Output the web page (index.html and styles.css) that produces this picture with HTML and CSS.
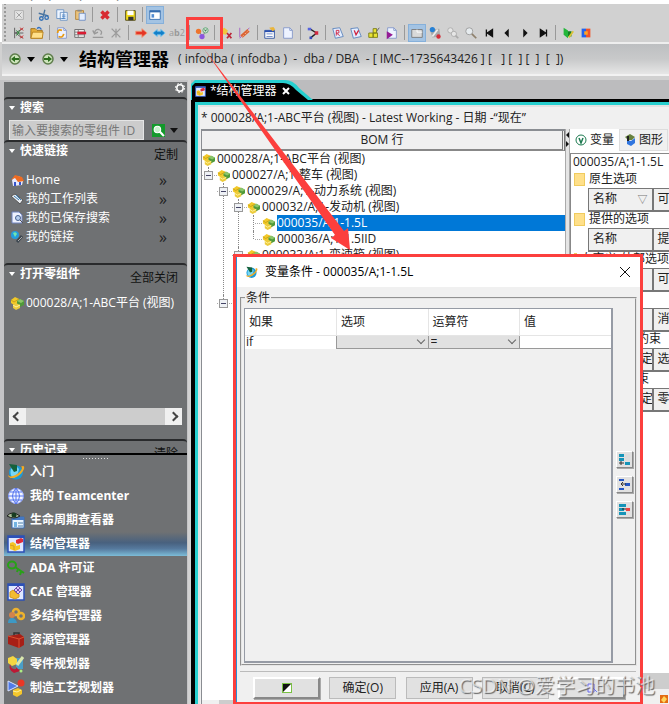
FILE: index.html
```html
<!DOCTYPE html>
<html lang="zh-CN">
<head>
    <meta charset="utf-8">
    <title>结构管理器</title>
    <link rel="stylesheet" href="styles.css">
</head>
<body>
    <svg class="defs">
        <symbol id="bom" viewBox="0 0 14 14"><path d="M1 4l4-3 4 2-1 4-4 2-3-2z" fill="#f2c928"/><path d="M1 4l3 2 5-3" stroke="#c9a21a" fill="none"/><path d="M7 5l3-2 4 2v4l-4 2-3-2z" fill="#4f9a3a"/><path d="M7 5l3-2 4 2-3 2z" fill="#8cc66a"/><path d="M3 9l3-2 4 2v3l-4 2-3-2z" fill="#eccb3c"/><path d="M3 9l3 2 4-2" stroke="#fff3a0" fill="none"/></symbol>
        <symbol id="globe" viewBox="0 0 18 18"><circle cx="9" cy="9.500" r="7" fill="#1b9bd8"/><path d="M4 6q5-5 8 0l-1 4-4 5q-5-2-3-9z" fill="#76d7f5"/><path d="M2 1l8 1v6L7 9z" fill="#14613c"/><path d="M1 12c1 6 12 3 16-6 1-4-2-3-3-2 3 0-1 7-8 9-3 1-4 0-5-1z" fill="#f3ab22"/></symbol>
        <symbol id="struct" viewBox="0 0 18 18"><path fill="#dfe8ff" stroke="#2c50b8" stroke-width="1.500" d="M1 1h16v16H1z"/><path fill="#2c50b8" d="M1 1h16v2H1z"/><path fill="#f6c526" d="M3 8l3-1 3 2v2l4-1v4l-5 2-5-2z"/><path fill="#e02c3a" d="M9 5l5-2 2 1v3l-5 2-2-1z"/><path d="M3 10l4 1v4" stroke="#d59d22" fill="none"/></symbol>
        <symbol id="page" viewBox="0 0 16 16"><path d="M3 2h7l3 3v9H3z" fill="#eef3ff" stroke="#8296c8"/><path d="M10 2v3h3" fill="none" stroke="#8296c8"/></symbol>
        <symbol id="folder" viewBox="0 0 16 16"><path d="M1 5V3h5l2 2h6v9H1z" fill="#e6ae38" stroke="#9c6c13"/><path d="M1 14l2-7h12l-1 7z" fill="#ffe08a" stroke="#b8811c"/><path d="M8 3q3-3 5 1" fill="none" stroke="#2d6fc4" stroke-width="1.500"/></symbol>
        <symbol id="key" viewBox="0 0 18 18"><ellipse cx="5" cy="6" rx="4" ry="3.500" fill="none" stroke="#27a217" stroke-width="2"/><path d="M8 8l9 6m-6-4l-1 3m4 0l-1 3" stroke="#27a217" stroke-width="2"/></symbol>
    </svg>

    <div class="menubar">· &nbsp; ¸ · &nbsp; &nbsp; &nbsp; ¸ · &nbsp; &nbsp; &nbsp; &nbsp; ¸ ·</div>

    <div class="toolbars">
        <div class="toolbar">
            <button class="tool" title="关闭"><svg viewBox="0 0 16 16"><path d="M3 3h10v10H3z" fill="#e4e4e4" stroke="#aaa"/><path d="M5 5l6 6m0-6l-6 6" stroke="#999"/></svg></button>
            <span class="sep"></span>
            <button class="tool" title="剪切"><svg viewBox="0 0 16 16"><path d="M9 2L7 10M2 6l11 3" stroke="#47729e" stroke-width="1.500"/><g fill="none" stroke="#316fb5" stroke-width="1.500"><circle cx="5" cy="12" r="2"/><circle cx="11" cy="11" r="2"/></g></svg></button>
            <button class="tool" title="复制"><svg viewBox="0 0 16 16"><path d="M2 2h8v10H2zM6 5h8v9H6z" fill="#eef5ff" stroke="#6c93c4"/><path d="M8 8h4m-4 2h4m-4 2h4" stroke="#4d86c5"/></svg></button>
            <button class="tool" title="粘贴"><svg viewBox="0 0 16 16"><path d="M3 3h9v10H3z" fill="#eac37d" stroke="#b58232"/><path d="M5 2h5v2H5z" fill="#888"/><path d="M7 6h7v8H7z" fill="#e4eeff" stroke="#6b8cc2"/></svg></button>
            <span class="sep"></span>
            <button class="tool" title="删除"><svg viewBox="0 0 16 16"><path d="M4 4l8 8m0-8l-8 8" stroke="#d82931" stroke-width="4"/></svg></button>
            <span class="sep"></span>
            <button class="tool" title="保存"><svg viewBox="0 0 16 16"><path d="M3 3h11v11H3z" fill="#f2dc1a" stroke="#4d4515"/><path d="M5 3h7v5H5z" fill="#fff"/><path d="M6 10h6v4H6z" fill="#333"/></svg></button>
            <span class="sep"></span>
            <button class="tool active" title="导航"><svg viewBox="0 0 16 16"><path d="M2 3h12v10H2z" fill="#fff" stroke="#356cae"/><path d="M2 3h12v2H2z" fill="#356cae"/><path d="M4 7h3v4H4z" fill="#528cd1"/></svg></button>
        </div>
        <div class="toolbar">
            <button class="tool" title="展开"><svg viewBox="0 0 16 16"><path d="M3 2v12M3 8h10M4 8l8-5M4 8l8 6" stroke="#555"/><path d="M9 2l4 3m0-3L9 5m0 6l4 3m0-3l-4 3" stroke="#c33"/><path d="M5 5l4 5M9 5l-4 6" stroke="#268d36"/></svg></button>
            <button class="tool" title="打开"><svg><use href="#folder"/></svg></button>
            <span class="sep"></span>
            <button class="tool" title="刷新"><svg><use href="#page"/></svg><svg class="over" viewBox="0 0 16 16"><path d="M3 8q0-5 5-3M10 9q-1 5-6 3" fill="none" stroke="#e79a12" stroke-width="2"/></svg></button>
            <button class="tool" title="移除行"><svg viewBox="0 0 16 16"><path d="M2 4h11v9H2z" fill="#eee" stroke="#666"/><path d="M2 7h11M2 10h11M6 4v9" stroke="#777"/><path d="M5 8h10" stroke="#da1b32" stroke-width="3"/></svg></button>
            <button class="tool" title="撤消"><svg viewBox="0 0 16 16"><path d="M4 8q1-5 5-4 5 2 2 6M2 5l2 4 4-2M2 13h12" fill="none" stroke="#999" stroke-width="1.500"/></svg></button>
            <button class="tool" title="取消"><svg viewBox="0 0 16 16"><path d="M3 3l10 10m0-10L3 13M8 3v10" stroke="#9b9b9b" stroke-width="1.500"/></svg></button>
            <span class="sep"></span>
            <button class="tool" title="前进"><svg viewBox="0 0 16 16"><path d="M2 6h7V3l6 5-6 5v-3H2z" fill="#e53525" stroke="#ef9a78"/></svg></button>
            <button class="tool" title="替换"><svg viewBox="0 0 16 16"><path d="M1 8l5-4v2h4V4l5 4-5 4v-2H6v2z" fill="#127fc8" stroke="#6fc1ee"/></svg></button>
            <button class="tool wide" title="文本">a<b>b</b>2</button>
            <span class="sep"></span>
            <button class="tool marked" title="变量条件"><svg viewBox="0 0 16 16"><path d="M4 6l5 6m0 0l3-7" stroke="#777"/><circle cx="4" cy="6" r="3" fill="#ee742c"/><circle cx="12" cy="5" r="3" fill="#d4e7d8" stroke="#57a16b"/><path d="M11 4l1 2 1-2" stroke="#1c6838" fill="none"/><circle cx="8" cy="12" r="3" fill="#8b56df"/></svg></button>
            <span class="sep"></span>
            <button class="tool" title="清除条件"><svg viewBox="0 0 16 16"><path d="M1 4l4-2 4 3-2 5-5-1z" fill="#f2c73c"/><path d="M8 8l5 6m0-6l-5 6" stroke="#bd2739" stroke-width="2"/></svg></button>
            <button class="tool" title="连接"><svg viewBox="0 0 16 16"><path d="M2 2v11M2 14l11-12" stroke="#a45ec6"/><path d="M4 12l8-7" stroke="#db6434" stroke-width="4"/><path d="M5 12l8-8" stroke="#f9c2a1" stroke-dasharray="2 2"/></svg></button>
            <span class="sep"></span>
            <button class="tool" title="属性"><svg viewBox="0 0 16 16"><path d="M2 5h11v9H2z" fill="#fff" stroke="#294f9d"/><path d="M2 5h11v2H2z" fill="#294fb0"/><path d="M4 9h7m-7 3h7" stroke="#6684c5"/><path d="M7 2l5-1 2 3-3 2z" fill="#eab53a"/></svg></button>
            <button class="tool" title="新建"><svg><use href="#page"/></svg></button>
            <span class="sep"></span>
            <button class="tool" title="路径"><svg viewBox="0 0 16 16"><path d="M4 3l8 5-6 5" fill="none" stroke="#222" stroke-width="1.500"/><path d="M2 2h4v3H2z" fill="#5664df"/><path d="M10 6h4v4h-4z" fill="#d22840"/><path d="M4 12h3v3H4z" fill="#3347b8"/></svg></button>
            <span class="sep"></span>
            <button class="tool" title="版本规则"><svg viewBox="0 0 16 16"><path d="M2 3l8-1 4 10-9 2z" fill="#e2edff" stroke="#5c84bc"/><path d="M6 11V5h3v3H6l4 3" fill="none" stroke="#d1203b"/></svg></button>
            <button class="tool" title="变量规则"><svg viewBox="0 0 16 16"><path d="M2 3l8-1 4 10-9 2z" fill="#e2edff" stroke="#5c84bc"/><path d="M6 5l2 5 3-5" fill="none" stroke="#d1203b" stroke-width="1.500"/></svg></button>
            <button class="tool" title="配置"><svg viewBox="0 0 16 16"><g fill="#e9e334" stroke="#787a17"><path d="M2 8h5v5H2zM7 8h5v5H7zM7 3h4v5H7z"/></g><path d="M11 6l3-4" stroke="#555"/></svg></button>
            <button class="tool" title="导出"><svg><use href="#page"/></svg><svg class="over" viewBox="0 0 16 16"><path d="M2 6l7 4-7 5z" fill="#941b95"/></svg></button>
            <span class="sep"></span>
            <button class="tool active" title="面板"><svg viewBox="0 0 16 16"><path d="M2 4h12v9H2z" fill="#d9d9d9" stroke="#777"/><path d="M8 4v3h6" fill="none" stroke="#fff"/></svg></button>
            <button class="tool" title="比较"><svg viewBox="0 0 16 16"><path d="M2 4l11-1 1 9-9 1z" fill="#aaa"/><path d="M5 12l6-8" stroke="#eee" stroke-width="2"/><circle cx="5" cy="4" r="3" fill="#2781d5"/><circle cx="12" cy="12" r="2.500" fill="#d62c38"/></svg></button>
            <button class="tool" title="缩放"><svg viewBox="0 0 16 16"><g fill="#e6e6e6" stroke="#aaa"><circle cx="5" cy="5" r="3"/><circle cx="9" cy="9" r="3"/></g><path d="M11 11l3 3" stroke="#aaa" stroke-width="2"/></svg></button>
            <button class="tool" title="查找"><svg viewBox="0 0 16 16"><circle cx="6" cy="6" r="4" fill="#e6ebee" stroke="#999"/><path d="M9 9l5 5" stroke="#8e806c" stroke-width="2"/></svg></button>
            <button class="tool" title="第一个"><svg viewBox="0 0 16 16"><path d="M5 4v8M12 4v8L6 8z" stroke="#111" fill="#111" stroke-width="1.500"/></svg></button>
            <button class="tool" title="上一个"><svg viewBox="0 0 16 16"><path d="M10 3v10L5 8z" fill="#111"/></svg></button>
            <button class="tool" title="下一个"><svg viewBox="0 0 16 16"><path d="M6 3v10l5-5z" fill="#111"/></svg></button>
            <button class="tool" title="最后一个"><svg viewBox="0 0 16 16"><path d="M12 4v8M5 4v8l6-4z" stroke="#111" fill="#111" stroke-width="1.500"/></svg></button>
            <span class="sep"></span>
            <button class="tool" title="应用"><svg viewBox="0 0 16 16"><path d="M3 2l5 3v9l-5-4z" fill="#23b63a"/><path d="M8 6h4v6H8z" fill="#137d23"/><path d="M9 13l5-7" stroke="#dac337" stroke-width="2"/></svg></button>
            <button class="tool" title="拼合"><svg viewBox="0 0 16 16"><path d="M3 3h5v10H3z" fill="#2263ef"/><path d="M8 3h5v10H8z" fill="#f2532a"/><path d="M6 6h4v4H6z" fill="#ffa425"/></svg></button>
        </div>
    </div>

    <header class="banner">
        <button class="round" title="后退"><svg viewBox="0 0 14 14"><circle cx="7" cy="7" r="5" fill="#cde4bb" stroke="#5e7d4b" stroke-width="1.500"/><path d="M3 7l4-3v2h4v2H7v2z" fill="#2c6e1e"/></svg></button>
        <span class="caret"></span>
        <button class="round" title="前进"><svg viewBox="0 0 14 14"><circle cx="7" cy="7" r="5" fill="#cde4bb" stroke="#5e7d4b" stroke-width="1.500"/><path d="M11 7L7 4v2H3v2h4v2z" fill="#2c6e1e"/></svg></button>
        <span class="caret"></span>
        <h1>结构管理器</h1>
        <span class="session">( infodba ( infodba )  -  dba / DBA  - [ IMC--1735643426 ] [ &nbsp; ] [ &nbsp;] [ &nbsp;] &nbsp;[ &nbsp;])</span>
    </header>

    <main>
        <aside class="sidebar">
            <div class="side-top"><svg viewBox="0 0 12 12"><circle cx="6" cy="6" r="3.200" fill="none" stroke="#fff" stroke-width="1.500"/><circle cx="6" cy="6" r="4.600" fill="none" stroke="#fff" stroke-dasharray="1.800 1.800"/></svg></div>

            <section class="panel search">
                <h2>搜索</h2>
                <div class="search-row">
                    <input type="text" placeholder="输入要搜索的零组件 ID" aria-label="搜索零组件">
                    <button class="go" title="搜索"><svg viewBox="0 0 12 12"><circle cx="5" cy="5" r="3" fill="#c9f2cd" stroke="#fff"/><path d="M7 7l4 4" stroke="#fff" stroke-width="2"/></svg></button>
                    <span class="caret"></span>
                </div>
            </section>

            <section class="panel links">
                <h2>快速链接</h2>
                <a class="action" href="#">定制</a>
                <ul>
                    <li><svg viewBox="0 0 14 14"><path d="M2 7l3-4h4l4 5-1 4-9 1z" fill="#e7eaff"/><path d="M1 7l4-5 7 2 2 4-6 1-3-4z" fill="#ef6c22"/><path d="M4 9h2v4H4zM9 9h2v3H9z" fill="#3754c9"/></svg><a href="#">Home</a><span>»</span></li>
                    <li><svg viewBox="0 0 14 14"><path d="M1 4l4-2 8 6-3 4z" fill="#e9ecef" stroke="#555"/><path d="M4 4l5 4m-3-5l5 5" stroke="#397fb9"/></svg><a href="#">我的工作列表</a><span>»</span></li>
                    <li><svg viewBox="0 0 14 14"><path d="M2 1h7l3 3v8H2z" fill="#eef2ff" stroke="#7185c0"/><circle cx="8" cy="7" r="2.500" fill="#b7cff0" stroke="#47618f"/><path d="M10 9l3 3" stroke="#555"/></svg><a href="#">我的已保存搜索</a><span>»</span></li>
                    <li><svg viewBox="0 0 14 14"><circle cx="5" cy="5" r="4" fill="#239dde"/><path d="M3 3q3-2 4 1L5 7z" fill="#73e5ad"/><path d="M7 12l5-6" stroke="#3d4750" stroke-width="3"/><path d="M8 11l4-4" stroke="#aaa"/></svg><a href="#">我的链接</a><span>»</span></li>
                </ul>
            </section>

            <section class="panel opened">
                <h2>打开零组件</h2>
                <a class="action" href="#">全部关闭</a>
                <ul>
                    <li><svg><use href="#bom"/></svg><a href="#">000028/A;1-ABC平台 (视图)</a></li>
                </ul>
                <div class="hscroll"><button title="向左"></button><i></i><button class="next" title="向右"></button></div>
            </section>

            <section class="panel history">
                <h2>历史记录</h2>
                <a class="action" href="#">清除</a>
            </section>

            <div class="sash"></div>

            <nav>
                <a href="#"><svg><use href="#globe"/></svg>入门</a>
                <a href="#"><svg viewBox="0 0 18 18"><circle cx="9" cy="9" r="7.500" fill="#f2f5ff" stroke="#9daeff"/><path d="M1 9h16M3 5h12M3 13h12M9 1v16M9 1Q2 9 9 17M9 1q7 8 0 16" fill="none" stroke="#5474f0"/></svg>我的 Teamcenter</a>
                <a href="#"><svg viewBox="0 0 18 18"><path d="M5 6h12v11H5z" fill="#e9f4ff" stroke="#3a6fb5"/><path d="M5 6h12v3H5z" fill="#4478c4"/><path d="M7 11h3v5H7z" fill="#71b3e3"/><path d="M11 12h5m-5 3h5" stroke="#4b7eaa"/><path d="M0 5q5-6 13 0-6 4-13 0z" fill="#a9bb98" stroke="#222"/><circle cx="7" cy="4" r="2.500" fill="#183c21"/></svg>生命周期查看器</a>
                <a href="#" class="current"><svg><use href="#struct"/></svg>结构管理器</a>
                <a href="#"><svg><use href="#key"/></svg>ADA 许可证</a>
                <a href="#"><svg viewBox="0 0 18 18"><path fill="#dfe8ff" stroke="#2c50b8" stroke-width="1.500" d="M1 1h16v16H1z"/><path fill="#2c50b8" d="M1 1h16v2H1z"/><path fill="#f4bc31" stroke="#d59d22" d="M3 9l3-2 3 3 3 1v3l-4 2-5-2z"/><path d="M11 3l4 4-4 4-4-4zM9 5l4 4m0-4L9 9" fill="#d9cdf2" stroke="#744aae"/></svg>CAE 管理器</a>
                <a href="#"><svg viewBox="0 0 18 18"><circle cx="9" cy="5" r="3" fill="none" stroke="#edb22d" stroke-width="2.500"/><circle cx="14" cy="9" r="3" fill="none" stroke="#edb22d" stroke-width="2.500"/><circle cx="5" cy="8" r="3" fill="#d1834d"/><path d="M1 16q0-5 4-5t5 5z" fill="#3d99c5"/></svg>多结构管理器</a>
                <a href="#"><svg viewBox="0 0 18 18"><path d="M7 4V2h5v3" fill="none" stroke="#333" stroke-width="1.500"/><path d="M1 5l12-2 4 3v8l-5 3-11-4z" fill="#a71f16"/><path d="M1 5l11 3 5-2M12 8v9" stroke="#dc5131" fill="none"/></svg>资源管理器</a>
                <a href="#"><svg viewBox="0 0 18 18"><path d="M9 3h7v11H9z" fill="#4b9ec7"/><path d="M1 3l5-2 4 3v5l-5 2-4-3z" fill="#f4d642"/><path d="M10 10l6-8" stroke="#d9e7ae" stroke-width="3"/><path d="M3 9q1 6 6 5v-2l4 4-6 2q-6-3-4-9z" fill="#bd1935"/><circle cx="14" cy="16" r="1.500" fill="#aded83"/></svg>零件规划器</a>
                <a href="#"><svg viewBox="0 0 18 18"><path d="M1 2l10 5-10 5z" fill="#507be8" stroke="#d9e3ff"/><circle cx="14" cy="4" r="3.500" fill="#e93725"/><path d="M6 11l5-2 4 2v4l-5 3-4-2z" fill="#f5c72b"/><path d="M6 12l4 1 4-2" stroke="#fff2a1" fill="none"/></svg>制造工艺规划器</a>
                <a href="#" title="制造"><svg><use href="#globe"/></svg></a>
            </nav>
        </aside>

        <div class="editor">
            <div class="tabstrip">
                <svg class="tab-shape" viewBox="0 0 124 20"><path d="M0 20V4l4-4h90q8 0 14 8l14 12z" fill="#26cfcf"/><path d="M1 20V6l3-3h88q7 0 13 7l12 10z" fill="#000"/></svg>
                <div class="tab"><svg><use href="#struct"/></svg><span>*结构管理器</span><button title="关闭"><svg viewBox="0 0 8 8"><path d="M1 1l6 6m0-6L1 7" stroke="#fff" stroke-width="2"/></svg></button></div>
            </div>
            <div class="frame">
                <div class="frame-title">* 000028/A;1-ABC平台 (视图) - Latest Working - 日期 -“现在”</div>
                <div class="split">
                    <div class="bom">
                        <div class="bom-head">BOM 行</div>
                        <div class="row root"><svg><use href="#bom"/></svg><span>000028/A;1-ABC平台 (视图)</span></div>
                        <ul class="tree">
                            <li>
                                <div class="row"><i class="minus"></i><svg><use href="#bom"/></svg><span>000027/A;1-整车 (视图)</span></div>
                                <ul>
                                    <li>
                                        <div class="row"><i class="minus"></i><svg><use href="#bom"/></svg><span>000029/A;1-动力系统 (视图)</span></div>
                                        <ul>
                                            <li>
                                                <div class="row"><i class="minus"></i><svg><use href="#bom"/></svg><span>000032/A;1-发动机 (视图)</span></div>
                                                <ul>
                                                    <li><div class="row selected"><i></i><svg><use href="#bom"/></svg><span>000035/A;1-1.5L</span></div></li>
                                                    <li><div class="row"><i></i><svg><use href="#bom"/></svg><span>000036/A;1-1.5IID</span></div></li>
                                                </ul>
                                            </li>
                                            <li>
                                                <div class="row"><i class="minus"></i><svg><use href="#bom"/></svg><span>000033/A;1-变速箱 (视图)</span></div>
                                                <ul>
                                                    <li><div class="row"><i></i><svg><use href="#bom"/></svg></div></li>
                                                    <li><div class="row"><i></i><svg><use href="#bom"/></svg></div></li>
                                                </ul>
                                            </li>
                                        </ul>
                                    </li>
                                    <li><div class="row"><i class="minus"></i><svg><use href="#bom"/></svg></div></li>
                                </ul>
                            </li>
                        </ul>
                        <div class="bom-scroll"></div>
                    </div>
                    <div class="divider"></div>
                    <div class="details">
                        <div class="detail-tabs">
                            <button class="on"><svg viewBox="0 0 12 12"><circle cx="6" cy="6" r="5" fill="#fff" stroke="#1d7a50"/><path d="M4 4l2 5 2-5" fill="none" stroke="#1d7a50" stroke-width="1.500"/></svg>变量</button>
                            <button><svg viewBox="0 0 12 12"><path d="M1 3l5-3 5 3-3 3H4z" fill="#66813e"/><path d="M3 6l4 1 4-3v5l-4 3-4-2z" fill="#3176df"/><path d="M4 2v5" stroke="#222" stroke-width="2"/></svg>图形</button>
                        </div>
                        <div class="options">
                            <div class="item-name">000035/A;1-1.5L</div>
                            <div class="group"><div class="group-name"><i></i>原生选项</div><table><tr><th>名称<em>▽</em></th><th>可见性</th></tr></table></div>
                            <div class="group"><div class="group-name"><i></i>提供的选项</div><table><tr><th>名称</th><th>提供者</th></tr></table></div>
                            <div class="group"><div class="group-name"><i></i>自定义/外部选项</div><table><tr><th></th><th>可见性</th></tr></table></div>
                            <div class="group"><div class="group-name"><i></i></div><table><tr><th></th><th>消息</th></tr></table></div>
                            <div class="group"><div class="group-name"><i></i>派生缺省约束</div><table><tr><th>选项已设定</th><th>选项</th></tr></table></div>
                            <div class="group"><div class="group-name"><i></i>有效性约束</div><table><tr><th>选项已设定</th><th>零件</th></tr></table></div>
                        </div>
                        <div class="details-scroll"></div>
                        <div class="details-foot"><svg viewBox="0 0 10 10"><path d="M1 1h8v8H1z" fill="#e36b12"/><path d="M2 6l3-4 3 3-3 4z" fill="#ffd45a"/></svg></div>
                    </div>
                </div>
            </div>
        </div>
    </main>

    <div class="dialog" role="dialog" aria-label="变量条件">
        <div class="dialog-title"><svg><use href="#globe"/></svg><span>变量条件 - 000035/A;1-1.5L</span><button title="关闭"><svg viewBox="0 0 12 12"><path d="M1 1l10 10m0-10L1 11" stroke="#111"/></svg></button></div>
        <fieldset>
            <legend>条件</legend>
            <div class="cond">
                <table>
                    <tr><th>如果</th><th>选项</th><th>运算符</th><th>值</th></tr>
                    <tr>
                        <td>if</td>
                        <td class="combo"><select aria-label="选项"><option></option></select></td>
                        <td class="combo"><select aria-label="运算符"><option>=</option><option>!=</option></select></td>
                        <td class="value"><input type="text" aria-label="值"></td>
                    </tr>
                </table>
            </div>
            <div class="cond-tools">
                <button title="添加"><svg viewBox="0 0 12 12"><path d="M1 0h5v3H1zM1 4h5v3H1zM7 8h5v3H7z" fill="#1594b8"/><path d="M7 0h5v7H7z" fill="#ddd"/><path d="M1 9h5M3 7v4" stroke="#333"/></svg></button>
                <button title="插入"><svg viewBox="0 0 12 12"><path d="M1 0h5v2H1zM7 4h5v3H7zM1 9h5v2H1z" fill="#2456c5"/><path d="M3 5h5M5 3L3 5l2 2" stroke="#333" fill="none"/></svg></button>
                <button title="移除"><svg viewBox="0 0 12 12"><path d="M1 0h7v3H1zM1 4h5v3H1zM1 8h7v3H1z" fill="#1594b8"/><path d="M8 4h4v3H8z" fill="#e44"/><path d="M4 5h4" stroke="#222"/></svg></button>
            </div>
        </fieldset>
        <div class="dialog-buttons">
            <button class="raised" title="清除"><svg viewBox="0 0 10 10"><path d="M0 0h10v10H0z" fill="#fff" stroke="#7ac143" stroke-width="2"/><path d="M1 1h8L1 9z" fill="#111"/></svg></button>
            <button>确定(O)</button>
            <button>应用(A)</button>
            <button>取消(C)</button>
            <button class="raised" title="帮助"><svg viewBox="0 0 10 10"><path d="M1 1h6v8H1z" fill="#e5e5ff" stroke="#6b6bea"/><path d="M6 5l4 4" stroke="#6b6bea"/></svg></button>
        </div>
    </div>

    <svg class="arrow" viewBox="0 0 150 204"><path d="M0 0L140 182l4-3 2 22-19-12 4-3z" fill="#fc3f3d"/></svg>
    <div class="watermark">CSDN @爱学习的书池</div>
</body>
</html>
```

FILE: styles.css
```css
*, *::before, *::after { box-sizing: border-box; }
body { margin: 0; height: 100vh; overflow: hidden; position: relative; display: flex; flex-direction: column; background: #d1d1d1; color: #222; font: 12px/16px "Open Sans", "Noto Sans CJK SC", sans-serif; }
button, input, select { font: inherit; color: inherit; margin: 0; padding: 0; border: 0; border-radius: 0; background: none; }
h1, h2, ul { margin: 0; padding: 0; list-style: none; }
a { color: inherit; text-decoration: none; }
svg { display: block; flex: none; }
table { border-collapse: collapse; }
.defs { position: absolute; width: 0; height: 0; }

/* toolbars */
.menubar { height: 4px; flex: none; padding-left: 30px; background: #fff; overflow: hidden; line-height: 1px; color: #888; }
.toolbars { flex: none; height: 38px; padding: 2px 0 0 10px; border-left: 2px solid #fff; background: radial-gradient(circle, #999 1px, transparent 1px) 1px 2px / 4px 4px repeat-y, #d1d1d1; }
.toolbar { display: flex; height: 18px; margin-left: -2px; }
.tool { position: relative; width: 18px; height: 18px; flex: none; display: flex; align-items: center; justify-content: center; }
.tool svg { width: 14px; height: 14px; }
.tool .over { position: absolute; left: 2px; top: 2px; }
.tool.active { background: #a3c3e3; outline: 1px solid #86b0da; outline-offset: -1px; }
.tool.wide { font-size: 9px; color: #999; }
.marked::after { content: ""; position: absolute; left: -7px; top: -7px; width: 37px; height: 32px; border: 3px solid #fc3f3d; z-index: 2; }
.sep { width: 7px; flex: none; background: linear-gradient(#999, #999) 3px 1px / 1px 15px no-repeat; }

/* banner */
.banner { flex: none; height: 34px; margin: 0 0 4px 2px; padding-left: 6px; display: flex; align-items: center; border-top: 2px solid #eee; border-bottom: 2px solid #f2f2f2; background: linear-gradient(#bdbfc1, #c8c9ca 50%, #e6e6e6); }
.round { width: 14px; height: 14px; }
.round svg { width: 14px; height: 14px; }
.caret { width: 0; height: 0; flex: none; margin: 0 6px 0 5px; border: 4px solid transparent; border-top: 5px solid #000; border-bottom: 0; }
h1 { margin-left: 5px; font-size: 18px; line-height: 28px; color: #000; white-space: nowrap; }
.session { margin-left: 9px; white-space: pre; }

main { flex: 1; min-height: 0; display: flex; }

/* sidebar */
.sidebar { width: 188px; flex: none; display: flex; flex-direction: column; margin: 0 3px 0 0; border: solid #c4c4c6; border-width: 2px 1px 0 4px; background: #6f7173; color: #fff; overflow: hidden; }
.side-top { height: 15px; flex: none; display: flex; justify-content: flex-end; padding: 0 1px; }
.side-top svg { width: 12px; height: 12px; }
.panel { position: relative; flex: none; border-top: 2px solid #292a2c; border-radius: 4px 4px 0 0; overflow: hidden; }
.panel h2 { display: flex; align-items: center; padding-left: 5px; font-size: 12px; line-height: 18px; }
.panel h2::before { content: ""; margin-right: 5px; border: 3px solid transparent; border-top: 4px solid #fff; border-bottom: 0; }
.panel .action { position: absolute; right: 9px; top: 5px; color: #111; }
.panel li { display: flex; align-items: center; height: 19px; padding-left: 6px; white-space: nowrap; }
.panel li svg { width: 14px; height: 14px; margin-right: 2px; }
.panel li a { flex: 1; }
.panel li span { margin-right: 20px; font-size: 16px; line-height: 16px; color: #222; }
.search { height: 43px; }
.search-row { display: flex; align-items: center; padding: 3px 0 0 5px; }
.search-row input { width: 135px; height: 20px; padding: 0 2px; border: 1px solid #e5e5e5; background: #ccc; }
.search-row input::placeholder { color: #777; opacity: 1; }
.search-row .caret { border-top-color: #111; }
.go { width: 13px; height: 13px; margin: 0 0 0 8px; background: #13992b; }
.links { height: 123px; }
.links ul { padding-top: 10px; }
.opened { height: 176px; }
.opened ul { padding-top: 10px; }
.hscroll { display: flex; height: 17px; margin: 96px 5px 0; background: #cdcdcd; }
.hscroll i { flex: 1; }
.hscroll button { width: 17px; background: #f0f0f0; display: flex; align-items: center; justify-content: center; }
.hscroll button::before { content: ""; width: 7px; height: 7px; border: solid #444; border-width: 0 0 2px 2px; transform: rotate(45deg); }
.hscroll .next::before { border-width: 2px 2px 0 0; }
.history { height: 14px; }
.sash { height: 7px; flex: none; border-top: 2px solid #000; background: radial-gradient(circle, #ddd 1px, transparent 1px) 78px 2px / 3px 3px repeat-x; background-clip: content-box; padding: 0 77px; }
nav a { display: flex; align-items: center; gap: 5px; height: 24px; padding-left: 3px; font-weight: bold; white-space: nowrap; }
nav svg { width: 18px; height: 18px; }
nav .current { background: linear-gradient(#6f7173, #48617f 45%, #567a9e 70%, #7dbdd8); }

/* editor */
.editor { flex: 1; min-width: 0; display: flex; flex-direction: column; }
.tabstrip { position: relative; height: 19px; flex: none; background: #bcbcbe; }
.tab-shape { position: absolute; left: 0; top: 0; width: 124px; height: 20px; }
.tab { position: relative; display: flex; align-items: center; height: 20px; padding: 2px 0 0 4px; color: #fff; }
.tab svg { width: 11px; height: 11px; margin-right: 4px; }
.tab button { margin-left: 5px; }
.tab button svg { width: 8px; height: 8px; }
.frame { flex: 1; min-height: 0; display: flex; flex-direction: column; border: solid #000; border-width: 3px 0 0 4px; box-shadow: inset 3px 3px #27cece, inset 5px 5px #e2e2e2; background: #f0f0f0; padding: 6px 0 0 6px; }
.frame-title { height: 21px; flex: none; line-height: 20px; white-space: nowrap; }
.split { flex: 1; min-height: 0; display: flex; }
.bom { width: 364px; flex: none; display: flex; flex-direction: column; border: 2px solid #8a8d92; border-width: 2px 0 0 1px; background: #fff; overflow: hidden; }
.bom-head { height: 20px; flex: none; line-height: 18px; text-align: center; background: #f0f0f0; border-right: 3px double #777; border-bottom: 2px solid #888; }
.bom-scroll { height: 4px; flex: none; margin-top: auto; border-left: 17px solid #f0f0f0; background: #cdcdcd; }
.row { position: relative; display: flex; align-items: center; height: 16px; white-space: nowrap; }
.row svg { width: 13px; height: 13px; margin-right: 2px; }
.row span { flex: 1; }
.row i { width: 15px; height: 16px; flex: none; display: flex; align-items: center; background: linear-gradient(90deg, transparent 50%, #aaa 50%) 7px 8px / 2px 1px repeat-x; }
.row i:not(.minus) { padding-left: 7px; background-clip: content-box; }
.minus::before { content: ""; position: relative; width: 9px; height: 9px; margin-left: 2px; border: 1px solid #999; background: linear-gradient(#446, #446) center / 5px 1px no-repeat #eef1f5; }
.selected span { background: #0078d7; color: #fff; }
.tree ul { margin-left: 15px; }
.tree li { position: relative; }
.tree li::before { content: ""; position: absolute; left: 6px; top: 0; bottom: 0; border-left: 1px dotted #888; }
.tree li:last-child::before { bottom: auto; height: 8px; }
.divider { position: relative; width: 5px; flex: none; background: #e5e5e5; border-right: 1px solid #aaa; border-left: 1px solid #aaa; }
.divider::before, .divider::after { content: ""; position: absolute; left: 0; top: 3px; border: 3px solid transparent; border-right-color: #111; border-left: 0; }
.divider::after { top: 12px; border: 3px solid transparent; border-left-color: #111; border-right: 0; }
.details { flex: 1; min-width: 0; display: flex; flex-direction: column; overflow: hidden; }
.detail-tabs { display: flex; height: 24px; flex: none; border-bottom: 2px solid #fff; }
.detail-tabs button { display: flex; align-items: center; gap: 3px; padding: 0 4px; white-space: nowrap; border: 1px solid #ddd; }
.detail-tabs .on { background: #fff; border-color: #fff; }
.detail-tabs svg { width: 12px; height: 12px; }
.options { flex: 1; border: 1px solid #888; border-width: 1px 0 0 1px; background: #fff; overflow: hidden; white-space: nowrap; }
.item-name { height: 16px; padding-left: 2px; }
.group { height: 40px; }
.group-name { display: flex; align-items: center; height: 18px; }
.group-name i { width: 11px; height: 13px; margin: 0 4px 0 3px; background: #ffe08a; border: 1px solid #f0cb5e; }
.group table { table-layout: fixed; width: 200px; margin-left: 17px; background: #f0f0f0; }
.group th { height: 22px; padding: 0 4px; font-weight: normal; text-align: left; border: 1px solid #777; border-width: 1px 2px 2px 1px; overflow: hidden; }
.group th:first-child { width: 64px; }
.group em { float: right; font-style: normal; font-size: 10px; color: #777; }
.details-scroll { height: 16px; flex: none; background: #cdcdcd; }
.details-foot { height: 15px; flex: none; display: flex; align-items: flex-end; justify-content: flex-end; }
.details-foot svg { width: 10px; height: 10px; }

/* dialog */
.dialog { position: absolute; left: 233px; right: 26px; top: 254px; bottom: 0; display: flex; flex-direction: column; border: 3px solid #fc3f3d; border-bottom-width: 2px; background: #f0f0f0; box-shadow: inset 1px 0 #2c8fd6; }
.dialog-title { height: 30px; flex: none; display: flex; align-items: center; margin-left: 1px; padding: 0 9px 0 8px; background: #fff; color: #000; }
.dialog-title > svg { width: 13px; height: 13px; margin-right: 7px; }
.dialog-title span { flex: 1; }
.dialog-title button svg { width: 12px; height: 12px; }
fieldset { flex: 1; min-height: 0; min-width: 0; margin: 3px 3px 5px 4px; padding: 2px 0 1px 2px; border: 2px groove #e5e5e5; display: flex; }
legend { margin-left: 1px; padding: 0 1px; }
.cond { flex: 1; border: 1px solid #969ba5; border-width: 1px 2px 2px 1px; }
.cond table { width: 100%; table-layout: fixed; background: #fff; }
.cond th { height: 26px; padding: 0 4px; font-weight: normal; text-align: left; border-left: 1px solid #e5e5e5; border-bottom: 1px solid #e5e5e5; }
.cond th:first-child { border-left: 0; }
.cond td { height: 13px; padding: 0 0 0 1px; line-height: 12px; }
.cond .combo { position: relative; padding: 0; border: 1px solid #999; background: #e1e1e1; }
.combo select { appearance: none; display: block; width: 100%; height: 11px; padding-left: 2px; line-height: 11px; }
.combo::after { content: ""; position: absolute; right: 4px; top: 1px; width: 6px; height: 6px; border: solid #666; border-width: 0 1px 1px 0; transform: rotate(45deg); }
.cond .value { border-bottom: 1px solid #999; }
.value input { display: block; width: 100%; height: 11px; }
.cond-tools { width: 22px; flex: none; display: flex; flex-direction: column; align-items: center; gap: 8px; padding-top: 143px; }
.cond-tools button, .raised { border: 1px solid #fff; border-right-color: #888; border-bottom-color: #888; box-shadow: 1px 1px #aaa; background: #e1e1e1; }
.cond-tools button { width: 17px; height: 17px; display: flex; align-items: center; justify-content: center; }
.cond-tools svg { width: 12px; height: 12px; }
.dialog-buttons { height: 31px; flex: none; display: flex; justify-content: space-between; margin: 0 4px; padding: 5px 11px 4px 13px; border-top: 1px solid #bbb; }
.dialog-buttons button { width: 67px; height: 22px; display: flex; align-items: center; justify-content: center; border: 1px solid #bbb; background: #e1e1e1; }
.dialog-buttons .raised { border: 2px solid #fff; border-right-color: #888; border-bottom-color: #888; }
.dialog-buttons svg { width: 10px; height: 10px; }

/* annotation */
.arrow { position: absolute; left: 204px; top: 49px; width: 150px; height: 204px; pointer-events: none; }
.watermark { position: absolute; right: 14px; bottom: 4px; font-size: 20px; line-height: 28px; color: rgba(255, 255, 255, 0.6); text-shadow: 1px 1px 1px #666; pointer-events: none; }
```
